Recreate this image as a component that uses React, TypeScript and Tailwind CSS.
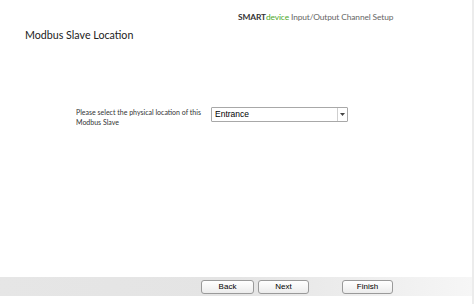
import React from "react";

export default function App() {
  return (
    <div className="w-[474px] h-[304px] bg-white flex flex-col border-r-2 border-[#ececec] overflow-hidden">
      <div className="h-[21px] flex items-end pl-[238px] text-[8.4px] tracking-[-0.12px] font-['Lato',sans-serif] leading-none">
        <span className="font-bold text-[#333]">SMART</span>
        <span className="text-[#4ea82a]">device</span>
        <span className="text-[#666] ml-[2px]">Input/Output Channel Setup</span>
      </div>
      <div className="pl-[25px] pt-[9px] text-[10.7px] text-[#222] font-['Lato',sans-serif] leading-none">
        Modbus Slave Location
      </div>
      <div className="flex items-start pl-[76px] pt-[66px]">
        <div className="w-[135px] text-[7px] leading-[10px] text-[#333] font-['Lato',sans-serif]">
          Please select the physical location of this
          <br />
          Modbus Slave
        </div>
        <div className="w-[137px] h-[15px] border border-[#a8a8a8] rounded-[1px] flex items-stretch bg-white">
          <div className="flex-1 flex items-center pl-[3px] text-[8.5px] text-black font-['Liberation_Sans',sans-serif]">
            Entrance
          </div>
          <div className="w-[10px] border-l border-[#cfcfcf] flex items-center justify-center">
            <svg width="5" height="3" viewBox="0 0 5 3"><path d="M0 0 L5 0 L2.5 3 Z" fill="#444" /></svg>
          </div>
        </div>
      </div>
      <div className="flex-1" />
      <div className="h-[19px] mb-[8px] bg-gradient-to-r from-[#e6e6e6] via-[#e4e4e4] to-[#f6f6f6] flex items-center">
        <div className="w-[201px]" />
        <button className="w-[53px] h-[14px] rounded-[3px] border border-[#9a9a9a] bg-gradient-to-b from-white to-[#ececec] text-[8px] text-black font-['Liberation_Sans',sans-serif] leading-none">
          Back
        </button>
        <div className="w-[4px]" />
        <button className="w-[51px] h-[14px] rounded-[3px] border border-[#9a9a9a] bg-gradient-to-b from-white to-[#ececec] text-[8px] text-black font-['Liberation_Sans',sans-serif] leading-none">
          Next
        </button>
        <div className="w-[33px]" />
        <button className="w-[51px] h-[14px] rounded-[3px] border border-[#9a9a9a] bg-gradient-to-b from-white to-[#ececec] text-[8px] text-black font-['Liberation_Sans',sans-serif] leading-none">
          Finish
        </button>
      </div>
    </div>
  );
}
